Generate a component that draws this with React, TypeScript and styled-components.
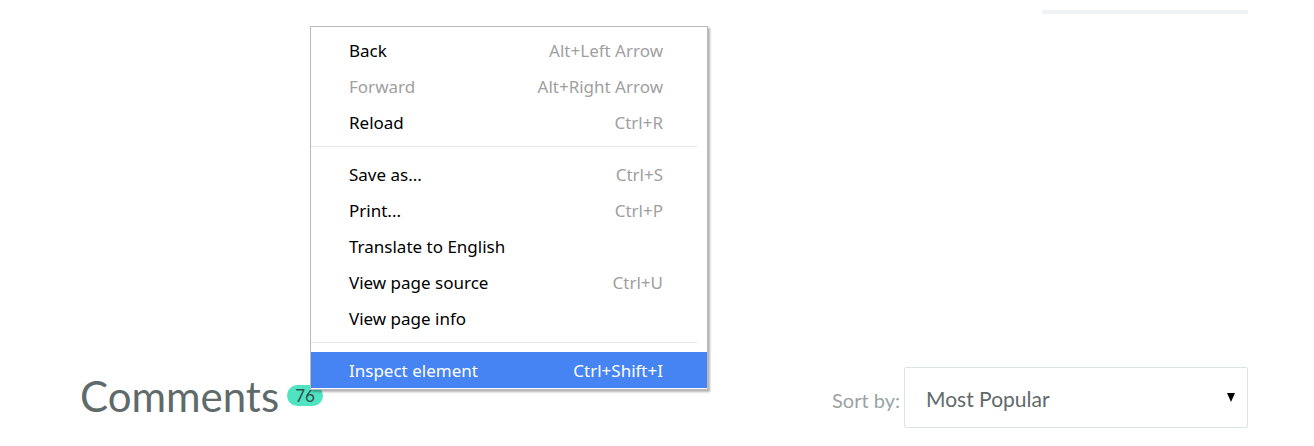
import { createGlobalStyle } from 'styled-components';
import styled from 'styled-components';

type MenuEntry = { label: string; shortcut?: string; disabled?: boolean; active?: boolean } | 'sep';

const MENU: MenuEntry[] = [
  { label: 'Back', shortcut: 'Alt+Left Arrow' },
  { label: 'Forward', shortcut: 'Alt+Right Arrow', disabled: true },
  { label: 'Reload', shortcut: 'Ctrl+R' },
  'sep',
  { label: 'Save as...', shortcut: 'Ctrl+S' },
  { label: 'Print...', shortcut: 'Ctrl+P' },
  { label: 'Translate to English' },
  { label: 'View page source', shortcut: 'Ctrl+U' },
  { label: 'View page info' },
  'sep',
  { label: 'Inspect element', shortcut: 'Ctrl+Shift+I', active: true },
];

function App() {
  return (
    <>
      <GlobalStyle />
      <S.Page>
        <S.TopBar />
        <S.Header>
          <S.TitleWrap>
            <S.Title>Comments</S.Title>
            <S.Badge>76</S.Badge>
          </S.TitleWrap>
          <S.Sort>
            <S.SortLabel>Sort by:</S.SortLabel>
            <S.Select>
              <span>Most Popular</span>
              <S.Arrow />
            </S.Select>
          </S.Sort>
        </S.Header>
      </S.Page>
      <S.Menu>
        {MENU.map((item, i) =>
          item === 'sep' ? (
            <S.Separator key={i} />
          ) : (
            <S.Item key={i} $disabled={item.disabled} $active={item.active}>
              <span>{item.label}</span>
              {item.shortcut && <S.Shortcut $active={item.active}>{item.shortcut}</S.Shortcut>}
            </S.Item>
          ),
        )}
      </S.Menu>
    </>
  );
}
export default App;

const GlobalStyle = createGlobalStyle`
  html, body {
    margin: 0;
    padding: 0;
    background: #fff;
  }
  body {
    width: 1314px;
    height: 446px;
    overflow: hidden;
    position: relative;
    font-family: Lato, "Liberation Sans", sans-serif;
  }
`;

const Page = styled.div`
  display: flex;
  flex-direction: column;
  width: 1168px;
  padding: 10px 0 0 80px;
`;
const TopBar = styled.div`
  align-self: flex-end;
  width: 206px;
  height: 4px;
  background: #eef4f3;
`;
const Header = styled.div`
  display: flex;
  justify-content: space-between;
  align-items: center;
  margin-top: 353px;
`;
const TitleWrap = styled.div`
  display: flex;
  align-items: center;
  gap: 8px;
`;
const Title = styled.h2`
  margin: 0;
  padding-bottom: 4px;
  font-family: Lato, sans-serif;
  font-weight: 400;
  font-size: 42px;
  line-height: 1;
  color: #5f6a6a;
`;
const Badge = styled.span`
  display: inline-flex;
  align-items: center;
  justify-content: center;
  width: 36px;
  height: 21px;
  margin-bottom: 4px;
  border-radius: 11px;
  background: #50e3c2;
  color: #2f4f4a;
  font-size: 17px;
`;
const Sort = styled.div`
  display: flex;
  align-items: center;
  gap: 4px;
`;
const SortLabel = styled.span`
  font-size: 20px;
  color: #9aa3a3;
  padding-top: 4px;
`;
const Select = styled.div`
  box-sizing: border-box;
  display: flex;
  align-items: center;
  justify-content: space-between;
  width: 344px;
  height: 61px;
  padding: 2px 12px 0 21px;
  border: 1px solid #dde3e3;
  border-radius: 2px;
  font-size: 21px;
  color: #5f6a6a;
`;
const Arrow = styled.span`
  width: 0;
  height: 0;
  margin-top: -2px;
  border-left: 4px solid transparent;
  border-right: 4px solid transparent;
  border-top: 9px solid #000;
`;

const Menu = styled.div`
  position: absolute;
  left: 310px;
  top: 26px;
  box-sizing: border-box;
  width: 398px;
  padding: 5px 0 1px;
  background: #fff;
  border: 1px solid #bababa;
  box-shadow: 2px 2px 2px rgba(0, 0, 0, 0.3);
  font-family: "Noto Sans", "Open Sans", sans-serif;
  font-size: 17px;
`;
const Item = styled.div<{ $disabled?: boolean; $active?: boolean }>`
  display: flex;
  align-items: center;
  justify-content: space-between;
  height: 36px;
  padding: 0 44px 0 38px;
  color: ${(p) => (p.$active ? '#fff' : p.$disabled ? '#a0a0a0' : '#000')};
  background: ${(p) => (p.$active ? '#4584f2' : 'transparent')};
`;
const Shortcut = styled.span<{ $active?: boolean }>`
  color: ${(p) => (p.$active ? '#fff' : '#a0a0a0')};
`;
const Separator = styled.div`
  height: 1px;
  margin: 6px 10px 9px 0;
  background: #e6e6e6;
`;

const S = {
  Page,
  TopBar,
  Header,
  TitleWrap,
  Title,
  Badge,
  Sort,
  SortLabel,
  Select,
  Arrow,
  Menu,
  Item,
  Shortcut,
  Separator,
};
